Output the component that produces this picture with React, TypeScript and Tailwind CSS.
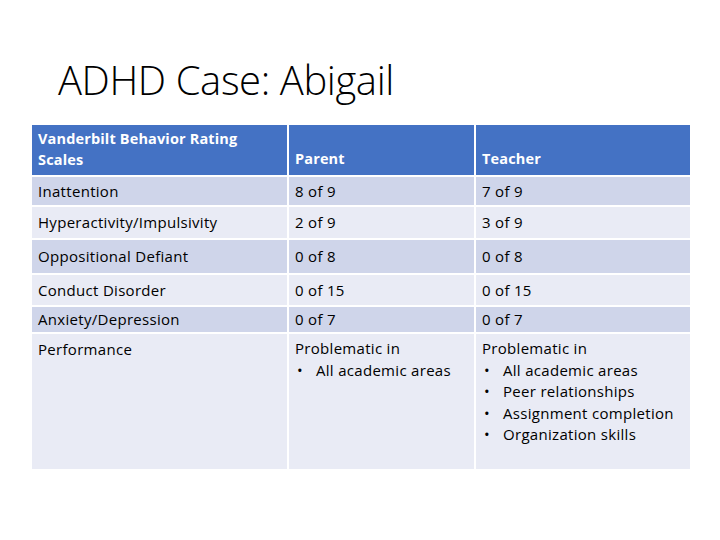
import React from "react";

const rows = [
  { label: "Inattention", parent: "8 of 9", teacher: "7 of 9", h: "h-[28px]", bg: "bg-[#cfd5ea]" },
  { label: "Hyperactivity/Impulsivity", parent: "2 of 9", teacher: "3 of 9", h: "h-[31px]", bg: "bg-[#e9ebf5]" },
  { label: "Oppositional Defiant", parent: "0 of 8", teacher: "0 of 8", h: "h-[33px]", bg: "bg-[#cfd5ea]" },
  { label: "Conduct Disorder", parent: "0 of 15", teacher: "0 of 15", h: "h-[30px]", bg: "bg-[#e9ebf5]" },
  { label: "Anxiety/Depression", parent: "0 of 7", teacher: "0 of 7", h: "h-[25px]", bg: "bg-[#cfd5ea]" },
];

const Bullets = ({ items }: { items: string[] }) => (
  <ul className="leading-[21.5px]">
    {items.map((t) => (
      <li key={t} className="flex">
        <span className="w-[21px] pl-[2px]">•</span>
        <span>{t}</span>
      </li>
    ))}
  </ul>
);

const App = () => {
  return (
    <div className="w-[720px] h-[540px] bg-white text-black font-['Liberation_Sans',Arial,sans-serif]">
      <h1 className="pl-[58px] pt-[56px] text-[40px] leading-[48px] font-light font-['Open_Sans',sans-serif] tracking-[-0.4px]">
        ADHD Case: Abigail
      </h1>

      <div className="ml-[32px] mt-[21px] grid grid-cols-[255px_185px_214px] gap-[2px] text-[15px] w-[658px] font-['Open_Sans',sans-serif] tracking-[0.3px]">
        {/* header */}
        <div className="h-[50px] bg-[#4472c4] text-white text-[14.5px] tracking-[0.15px] font-bold px-[6px] flex items-end pb-[5px] leading-[21px]">
          Vanderbilt Behavior Rating Scales
        </div>
        <div className="h-[50px] bg-[#4472c4] text-white text-[14.5px] tracking-[0.15px] font-bold px-[6px] flex items-end pb-[5px]">
          Parent
        </div>
        <div className="h-[50px] bg-[#4472c4] text-white text-[14.5px] tracking-[0.15px] font-bold px-[6px] flex items-end pb-[5px]">
          Teacher
        </div>

        {rows.map((r) => (
          <React.Fragment key={r.label}>
            <div className={`${r.h} ${r.bg} px-[6px] flex items-center`}>{r.label}</div>
            <div className={`${r.h} ${r.bg} px-[6px] flex items-center`}>{r.parent}</div>
            <div className={`${r.h} ${r.bg} px-[6px] flex items-center`}>{r.teacher}</div>
          </React.Fragment>
        ))}

        <div className="h-[135px] bg-[#e9ebf5] px-[6px] pt-[4px]">Performance</div>
        <div className="h-[135px] bg-[#e9ebf5] px-[6px] pt-[4px] leading-[21.5px]">
          <div>Problematic in</div>
          <Bullets items={["All academic areas"]} />
        </div>
        <div className="h-[135px] bg-[#e9ebf5] px-[6px] pt-[4px] leading-[21.5px]">
          <div>Problematic in</div>
          <Bullets
            items={[
              "All academic areas",
              "Peer relationships",
              "Assignment completion",
              "Organization skills",
            ]}
          />
        </div>
      </div>
    </div>
  );
};

export default App;
